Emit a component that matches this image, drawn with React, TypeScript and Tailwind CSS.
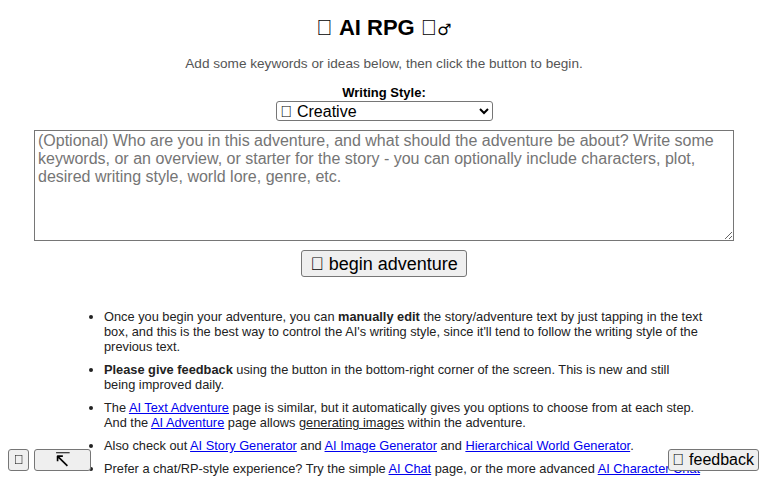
import React from 'react'

// emoji that the page's fonts lack come out as a plain box
const T = '\u{F0000}'

const A = ({ children }: { children: React.ReactNode }) => (
  <a href="#" className="text-[#0000ee] underline">{children}</a>
)

export default function App() {
  return (
    <div className="min-h-screen bg-white text-black font-['Liberation_Sans',Arial,sans-serif]">
      <div className="flex flex-col items-center pt-[15px]">
        <h1 className="text-[22px] font-bold leading-[26px] h-[26px]">
          {T} AI RPG {T}<span className="font-normal text-[16px] font-['DejaVu_Sans',sans-serif]">♂&#xFE0E;</span>
        </h1>
        <p className="mt-[15px] text-[13.6px] leading-[15px] text-[#555]">
          Add some keywords or ideas below, then click the button to begin.
        </p>
        <label className="mt-[14px] text-[13px] font-bold leading-[15px]">Writing Style:</label>
        <select className="mt-[1px] w-[217px] h-[20px] border border-[#767676] rounded-[3px] text-[16px] leading-[18px] bg-white">
          <option>{T} Creative</option>
          <option>{T} Classic</option>
          <option>{T} Action</option>
        </select>
        <textarea
          className="mt-[9px] w-[700px] h-[111px] border border-[#767676] px-[3px] py-[1px] text-[16px] leading-[18px] placeholder:text-[#757575] font-['Liberation_Sans',Arial,sans-serif]"
          placeholder="(Optional) Who are you in this adventure, and what should the adventure be about? Write some keywords, or an overview, or starter for the story - you can optionally include characters, plot, desired writing style, world lore, genre, etc."
        />
        <button className="mt-[9px] h-[27px] px-[8px] border border-[#767676] rounded-[3px] bg-[#efefef] text-[18px] leading-[20px]">
          {T} begin adventure
        </button>
        <ul className="mt-[32px] w-[640px] pl-[40px] list-disc text-[12.8px] leading-[15px] text-[#222] space-y-[8px] pb-10">
          <li>
            Once you begin your adventure, you can <b>manually edit</b> the story/adventure text by just tapping in the text box, and this is the best way to control the AI's writing style, since it'll tend to follow the writing style of the previous text.
          </li>
          <li>
            <b>Please give feedback</b> using the button in the bottom-right corner of the screen. This is new and still being improved daily.
          </li>
          <li>
            The <A>AI Text Adventure</A> page is similar, but it automatically gives you options to choose from at each step. And the <A>AI Adventure</A> page allows <span className="underline">generating images</span> within the adventure.
          </li>
          <li>
            Also check out <A>AI Story Generator</A> and <A>AI Image Generator</A> and <A>Hierarchical World Generator</A>.
          </li>
          <li>
            Prefer a chat/RP-style experience? Try the simple <A>AI Chat</A> page, or the more advanced <A>AI Character Chat</A> page.
          </li>
          <li>
            Your adventures are saved in your browser, so you can come back and continue them later.
          </li>
        </ul>
      </div>

      <div className="fixed left-[8px] bottom-[9px] flex gap-[5px]">
        <button className="w-[21px] h-[22px] border border-[#767676] rounded-[3px] bg-[#efefef] text-[13px]">{T}</button>
        <button className="w-[57px] h-[22px] border border-[#767676] rounded-[3px] bg-[#efefef] text-[20px] leading-[20px] font-['DejaVu_Sans',sans-serif]">↸</button>
      </div>
      <button className="fixed right-[9px] bottom-[9px] h-[22px] px-[4px] border border-[#767676] rounded-[3px] bg-[#efefef] text-[16px] leading-[18px] whitespace-nowrap">
        {T} feedback
      </button>
    </div>
  )
}
